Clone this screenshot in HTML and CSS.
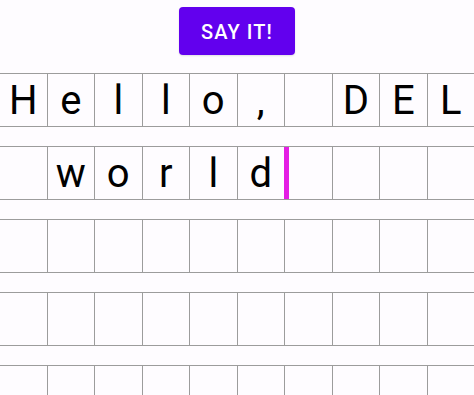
FILE: index.html
```html
<!DOCTYPE html>
<html>
<head>
<meta charset="utf-8">
<link rel="stylesheet" href="styles.css">
</head>
<body>
<div class="app">
  <div class="toolbar">
    <button class="say-btn">SAY IT!</button>
  </div>
  <div class="board">
    <div class="row">
      <div class="cell">H</div><div class="cell">e</div><div class="cell">l</div><div class="cell">l</div><div class="cell">o</div><div class="cell">,</div><div class="cell"></div><div class="cell">D</div><div class="cell">E</div><div class="cell">L</div>
    </div>
    <div class="row">
      <div class="cell"></div><div class="cell">w</div><div class="cell">o</div><div class="cell">r</div><div class="cell">l</div><div class="cell">d</div><div class="cell cursor-cell"><span class="cursor"></span></div><div class="cell"></div><div class="cell"></div><div class="cell"></div>
    </div>
    <div class="row">
      <div class="cell"></div><div class="cell"></div><div class="cell"></div><div class="cell"></div><div class="cell"></div><div class="cell"></div><div class="cell"></div><div class="cell"></div><div class="cell"></div><div class="cell"></div>
    </div>
    <div class="row">
      <div class="cell"></div><div class="cell"></div><div class="cell"></div><div class="cell"></div><div class="cell"></div><div class="cell"></div><div class="cell"></div><div class="cell"></div><div class="cell"></div><div class="cell"></div>
    </div>
    <div class="row">
      <div class="cell"></div><div class="cell"></div><div class="cell"></div><div class="cell"></div><div class="cell"></div><div class="cell"></div><div class="cell"></div><div class="cell"></div><div class="cell"></div><div class="cell"></div>
    </div>
  </div>
</div>
</body>
</html>
```

FILE: styles.css
```css
html, body {
  margin: 0;
  padding: 0;
  background: #fefcff;
  overflow: hidden;
}

.app {
  width: 474px;
  font-family: Roboto, "Noto Sans", sans-serif;
}

.toolbar {
  display: flex;
  justify-content: center;
  padding-top: 7px;
}

.say-btn {
  width: 116px;
  height: 48px;
  border: none;
  border-radius: 4px;
  background: #6200ee;
  color: #ffffff;
  font-family: Roboto, sans-serif;
  font-weight: 500;
  font-size: 20px;
  letter-spacing: 1.1px;
  padding: 2px 0 0 0;
  box-shadow: 0 1px 2px rgba(0, 0, 0, 0.12);
}

.board {
  display: flex;
  flex-direction: column;
  gap: 19px;
  margin-top: 18px;
}

.row {
  display: grid;
  grid-template-columns: repeat(10, 1fr);
  column-gap: 1px;
  background: #9c9c9c;
  border-top: 1px solid #9c9c9c;
  border-bottom: 1px solid #9c9c9c;
  height: 52px;
}

.cell {
  background: #fefcff;
  color: #000000;
  font-size: 40px;
  line-height: 50px;
  padding-top: 2px;
  text-align: center;
  position: relative;
}

.cursor {
  position: absolute;
  left: -1px;
  top: 0;
  bottom: 0;
  width: 5px;
  background: #e41ee4;
}
```
